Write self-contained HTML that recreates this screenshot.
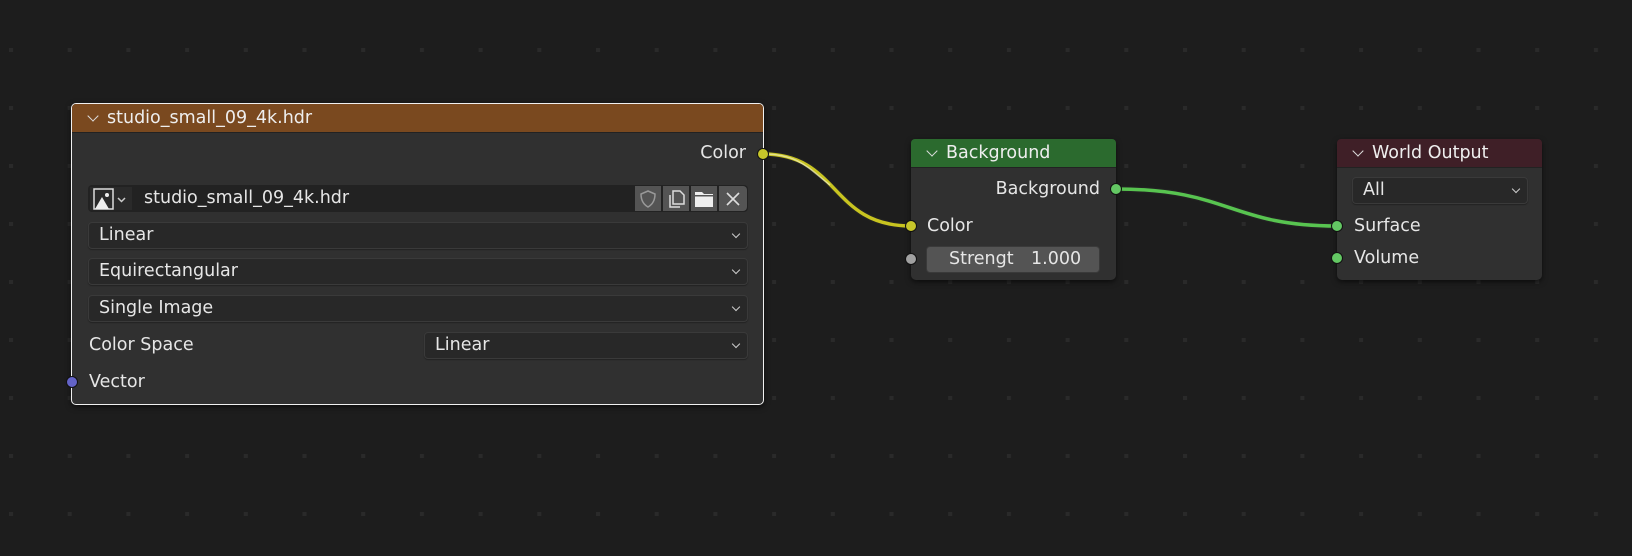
<!DOCTYPE html>
<html><head><meta charset="utf-8"><style>
*{box-sizing:border-box;margin:0;padding:0}
body{width:1632px;height:556px;overflow:hidden;background:#1d1d1d;font-family:"DejaVu Sans","Liberation Sans",sans-serif;color:#e6e6e6;position:relative;font-size:17.5px}
.node{position:absolute;background:#303030;border-radius:5px;box-shadow:0 2px 6px rgba(0,0,0,.6)}
.hd{position:absolute;left:0;right:0;top:0;border-radius:4px 4px 0 0;padding-left:35px;line-height:28px;color:#eee}
.hd:before{content:"";position:absolute;left:17px;top:8px;width:7px;height:7px;border-right:1.5px solid #ddd;border-bottom:1.5px solid #ddd;transform:rotate(45deg)}
.t{position:absolute;white-space:nowrap;line-height:20px}
.dd{position:absolute;background:#282828;border:1px solid #3a3a3a;border-radius:4px;padding-left:10px;line-height:24px;box-shadow:0 1px 1px #222}
.dd:after{content:"";position:absolute;right:8px;top:8px;width:5px;height:5px;border-right:1.5px solid #ccc;border-bottom:1.5px solid #ccc;transform:rotate(45deg)}
.s{position:absolute;width:12px;height:12px;border-radius:50%;border:1px solid #111}
.btn{position:absolute;top:186px;width:26px;height:25px;background:#545454;display:flex;align-items:center;justify-content:center}
</style></head><body>
<svg width="1632" height="556" style="position:absolute;left:0;top:0">
<defs><pattern id="p" x="9" y="48" width="58.7" height="58" patternUnits="userSpaceOnUse"><rect width="4" height="4" fill="#2a2a2a"/></pattern></defs>
<rect width="1632" height="556" fill="url(#p)"/>
<path d="M763 154 C 840 154, 830 226, 911 226" stroke="#222" stroke-width="6" fill="none"/>
<path d="M763 154 C 840 154, 830 226, 911 226" stroke="#c8c420" stroke-width="3.5" fill="none"/>
<path d="M763 154 C 800 154, 810 170, 830 185" stroke="#f0eec0" stroke-width="1.5" fill="none" opacity=".7"/>
<path d="M1116 189 C 1230 189, 1230 226, 1337 226" stroke="#222" stroke-width="6" fill="none"/>
<path d="M1116 189 C 1230 189, 1230 226, 1337 226" stroke="#58c450" stroke-width="3.5" fill="none"/>
</svg>

<div class="node" style="left:71px;top:103px;width:693px;height:302px;border:1.5px solid #f0f0f0">
 <div class="hd" style="background:#7a491f;height:29px;border-bottom:1px solid #222">studio_small_09_4k.hdr</div>
</div>
<div class="t" style="right:886px;top:143px">Color</div>
<div style="position:absolute;left:88px;top:185px;width:660px;height:27px;background:#222;border-radius:4px"></div>
<div style="position:absolute;left:90px;top:187px;width:42px;height:23px;background:#2a2a2a"></div>
<svg style="position:absolute;left:93px;top:188px" width="40" height="22"><rect x="1" y="1" width="19" height="20" fill="none" stroke="#ddd" stroke-width="1.5"/><path d="M2 21 L9 9 L16 21Z" fill="#eee"/><circle cx="14" cy="7" r="2" fill="#eee"/><path d="M25 10 l3.5 3.5 l3.5 -3.5" stroke="#ccc" stroke-width="1.5" fill="none"/></svg>
<div class="t" style="left:144px;top:188px">studio_small_09_4k.hdr</div>
<div class="btn" style="left:635px"><svg width="20" height="20"><path d="M10 2 L17 5 Q17 14 10 18 Q3 14 3 5Z" fill="none" stroke="#999" stroke-width="1.5"/></svg></div>
<div class="btn" style="left:663px"><svg width="20" height="20"><path d="M7 2 h7 l4 4 v9 h-11z M4 6 v12 h10" fill="none" stroke="#ddd" stroke-width="1.5"/></svg></div>
<div class="btn" style="left:691px"><svg width="22" height="20"><path d="M2 3 h7 l2 2 h9 v13 h-18z" fill="#eee"/><rect x="2" y="6" width="18" height="1.5" fill="#545454"/></svg></div>
<div class="btn" style="left:719px;width:28px;border-radius:0 4px 4px 0"><svg width="16" height="16"><path d="M2 2 L14 14 M14 2 L2 14" stroke="#ddd" stroke-width="1.6"/></svg></div>
<div class="dd" style="left:88px;top:222px;width:660px;height:27px">Linear</div>
<div class="dd" style="left:88px;top:258px;width:660px;height:27px">Equirectangular</div>
<div class="dd" style="left:88px;top:295px;width:660px;height:27px">Single Image</div>
<div class="t" style="left:89px;top:335px">Color Space</div>
<div class="dd" style="left:424px;top:332px;width:324px;height:27px">Linear</div>
<div class="t" style="left:89px;top:372px">Vector</div>
<div class="s" style="left:757px;top:148px;background:#c7c62a"></div>
<div class="s" style="left:66px;top:376px;background:#6363c7"></div>

<div class="node" style="left:911px;top:139px;width:205px;height:141px">
 <div class="hd" style="background:#2b6a2e;height:29px;border-bottom:1px solid #222">Background</div>
</div>
<div class="t" style="right:532px;top:179px">Background</div>
<div class="t" style="left:927px;top:216px">Color</div>
<div style="position:absolute;left:926px;top:246px;width:174px;height:27px;background:#545454;border-radius:4px;border:1px solid #3a3a3a;line-height:25px;color:#e6e6e6"><span style="position:absolute;left:22px">Strengt</span><span style="position:absolute;left:104px">1.000</span></div>
<div class="s" style="left:1110px;top:183px;background:#63c763"></div>
<div class="s" style="left:905px;top:220px;background:#c7c62a"></div>
<div class="s" style="left:905px;top:253px;background:#a1a1a1"></div>

<div class="node" style="left:1337px;top:139px;width:205px;height:141px">
 <div class="hd" style="background:#3f1f27;height:29px;border-bottom:1px solid #222">World Output</div>
</div>
<div class="dd" style="left:1352px;top:177px;width:176px;height:27px">All</div>
<div class="t" style="left:1354px;top:216px">Surface</div>
<div class="t" style="left:1354px;top:248px">Volume</div>
<div class="s" style="left:1331px;top:220px;background:#63c763"></div>
<div class="s" style="left:1331px;top:252px;background:#63c763"></div>
</body></html>
